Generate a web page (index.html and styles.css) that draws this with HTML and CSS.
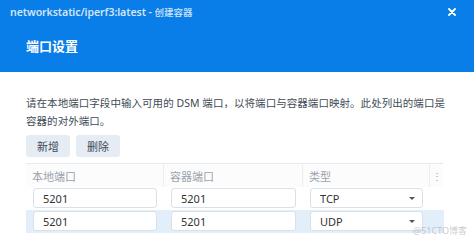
FILE: index.html
```html
<!DOCTYPE html>
<html lang="zh">
<head>
<meta charset="utf-8">
<link rel="stylesheet" href="styles.css">
</head>
<body>
<div class="dialog">
  <div class="header">
    <div class="titlebar">
      <span class="title">networkstatic/iperf3:latest - <span class="title-cjk">创建容器</span></span>
      <svg class="close" width="8" height="8" viewBox="0 0 8 8"><path d="M1 1L7 7M7 1L1 7" stroke="#fff" stroke-width="1.8" stroke-linecap="round"/></svg>
    </div>
    <div class="heading">端口设置</div>
  </div>
  <div class="content">
    <p class="desc">请在本地端口字段中输入可用的 DSM 端口，以将端口与容器端口映射。此处列出的端口是容器的对外端口。</p>
    <div class="toolbar">
      <button class="btn">新增</button>
      <button class="btn">删除</button>
    </div>
    <div class="grid">
      <div class="th">本地端口</div>
      <div class="th">容器端口</div>
      <div class="th">类型</div>
      <div class="th more">⋮</div>

      <div class="td"><div class="field">5201</div></div>
      <div class="td"><div class="field">5201</div></div>
      <div class="td"><div class="field select">TCP<span class="caret"></span></div></div>
      <div class="td"></div>

      <div class="td sel"><div class="field">5201</div></div>
      <div class="td sel"><div class="field">5201</div></div>
      <div class="td sel"><div class="field select">UDP<span class="caret"></span></div></div>
      <div class="td sel"></div>
    </div>
  </div>
  <div class="watermark">@51CTO博客</div>
</div>
</body>
</html>
```

FILE: styles.css
```css
* { box-sizing: border-box; }
html, body { margin: 0; padding: 0; }
body {
  width: 474px;
  height: 242px;
  overflow: hidden;
  background: #fff;
  font-family: "Noto Sans", "Noto Sans CJK SC", sans-serif;
  color: #333;
}
.dialog { position: relative; width: 474px; height: 242px; }
.header {
  background: #0a7ee8;
  height: 72px;
}
.titlebar {
  height: 24px;
  padding: 0 18px 0 10px;
  display: flex;
  align-items: center;
  justify-content: space-between;
}
.title {
  font-size: 10.6px;
  font-weight: 600;
  color: rgba(255,255,255,0.82);
  letter-spacing: -0.1px;
}
.title-cjk { font-size: 9.5px; font-weight: 500; letter-spacing: 0; }
.close { display: block; }
.heading {
  padding: 12px 0 0 26px;
  line-height: 20px;
  font-size: 13px;
  font-weight: 700;
  color: #fff;
}
.content { padding: 22px 20px 0 26px; }
.desc {
  margin: 0;
  font-size: 10.5px;
  letter-spacing: 0.05px;
  line-height: 18px;
  color: #414b55;
}
.toolbar {
  display: flex;
  gap: 6px;
  margin-top: 5px;
}
.btn {
  width: 44px;
  height: 22px;
  border: none;
  border-radius: 3px;
  background: #e6ecf3;
  color: #414b55;
  font-family: inherit;
  font-size: 11px;
  padding: 0;
}
.grid {
  margin-top: 6px;
  width: 417px;
  display: grid;
  grid-template-columns: 138px 139px 127px 13px;
  grid-template-rows: 24px 23px 23px;
}
.th {
  border-top: 1px solid #e6eaee;
  border-right: 1px solid #eceff2;
  background: #fcfcfd;
  font-size: 11px;
  color: #9aa3ab;
  padding-left: 6px;
  display: flex;
  align-items: center;
}
.th.more {
  border-right: none;
  padding-left: 0;
  justify-content: center;
  font-size: 10px;
}
.td {
  padding: 1px 7px 2px 7px;
  display: flex;
}
.td.sel { background: #e3eefb; }
.field {
  flex: 1;
  height: 20px;
  border: 1px solid #d9e0e7;
  border-radius: 3px;
  background: #fff;
  font-size: 11px;
  color: #333;
  padding-left: 9px;
  display: flex;
  align-items: center;
}
.select { position: relative; }
.caret {
  position: absolute;
  right: 7px;
  top: 8px;
  width: 0;
  height: 0;
  border-left: 3px solid transparent;
  border-right: 3px solid transparent;
  border-top: 3px solid #555;
}
.watermark {
  position: absolute;
  right: 7px;
  bottom: 5px;
  font-size: 9px;
  color: rgba(160,160,160,0.55);
}
```
